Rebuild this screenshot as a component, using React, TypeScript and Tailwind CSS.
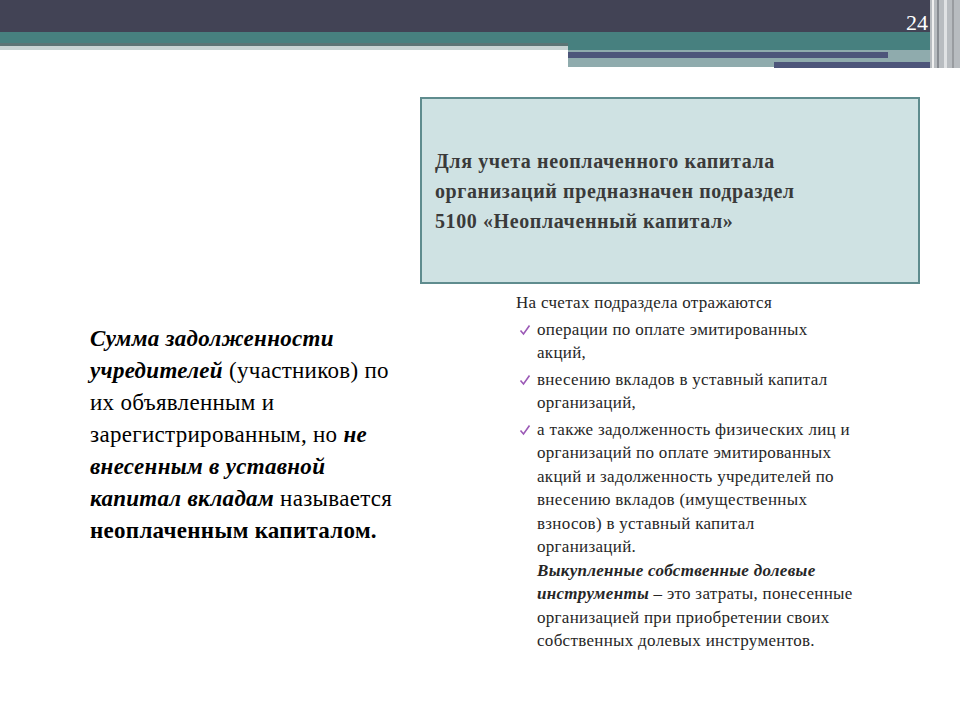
export default function App() {
  const check = (
    <svg width="12" height="12" viewBox="0 0 12 12" className="absolute left-[-18px] top-[6px]">
      <path d="M1.5 6.5 L4.5 10 L10.5 1.5" fill="none" stroke="#9b59b6" strokeWidth="1.6" />
    </svg>
  );
  return (
    <div className="relative w-[960px] h-[720px] bg-white overflow-hidden" style={{ fontFamily: '"Liberation Serif", serif' }}>
      <svg width="960" height="70" className="block">
        <rect x="0" y="0" width="960" height="32" fill="#424355" />
        <rect x="0" y="32" width="930" height="13" fill="#47807f" />
        <rect x="0" y="43" width="568" height="3" fill="#5c7475" />
        <rect x="0" y="46" width="568" height="4" fill="#c7d3d3" />
        <rect x="568" y="45" width="362" height="5" fill="#47807f" />
        <rect x="568" y="50" width="374" height="17" fill="#8fabad" />
        <rect x="568" y="52" width="320" height="6" fill="#4d557a" />
        <rect x="774" y="62" width="168" height="6" fill="#4d557a" />
        <rect x="930" y="0" width="30" height="68" fill="#b8bcc0" />
        <rect x="932" y="0" width="2" height="68" fill="#f0f0f0" />
        <rect x="937" y="0" width="2" height="68" fill="#888c92" />
        <rect x="944" y="0" width="3" height="68" fill="#e0e2e4" />
        <rect x="952" y="0" width="2" height="68" fill="#999ca0" />
        <text x="928" y="30" fill="white" fontSize="22" fontFamily="Liberation Serif" textAnchor="end">24</text>
      </svg>
      <div className="absolute left-[420px] top-[97px] w-[500px] h-[187px] bg-[#cfe2e3] border-2 border-[#5f8c8e] flex items-center pl-[13px]">
        <p className="text-[20px] leading-[30px] font-bold text-[#3a3a3a] whitespace-nowrap tracking-[0.6px]">
          Для учета неоплаченного капитала<br />организаций предназначен подраздел<br />5100 «Неоплаченный капитал»
        </p>
      </div>
      <div className="absolute left-[90px] top-[323px] text-[23px] leading-[32px] text-black whitespace-nowrap tracking-[0.3px]">
        <b><i>Сумма задолженности</i></b><br /><b><i>учредителей</i></b> (участников) по<br />их объявленным и<br />зарегистрированным, но <b><i>не</i></b><br /><b><i>внесенным в уставной</i></b><br /><b><i>капитал вкладам</i></b> называется<br /><b>неоплаченным капиталом.</b>
      </div>
      <div className="absolute left-[516px] top-[291px] text-[17px] leading-[23.5px] text-[#262626] whitespace-nowrap tracking-[0.3px]">
        <p>На счетах подраздела отражаются</p>
        <div className="pl-[21px] mt-[3px]">
          <div className="relative mb-[3px]">{check}операции по оплате эмитированных<br />акций,</div>
          <div className="relative mb-[3px]">{check}внесению вкладов в уставный капитал<br />организаций,</div>
          <div className="relative">{check}а также задолженность физических лиц и<br />организаций по оплате эмитированных<br />акций и задолженность учредителей по<br />внесению вкладов (имущественных<br />взносов) в уставный капитал<br />организаций.</div>
          <div><b><i>Выкупленные собственные долевые<br />инструменты</i></b> – это затраты, понесенные<br />организацией при приобретении своих<br />собственных долевых инструментов.</div>
        </div>
      </div>
    </div>
  );
}
